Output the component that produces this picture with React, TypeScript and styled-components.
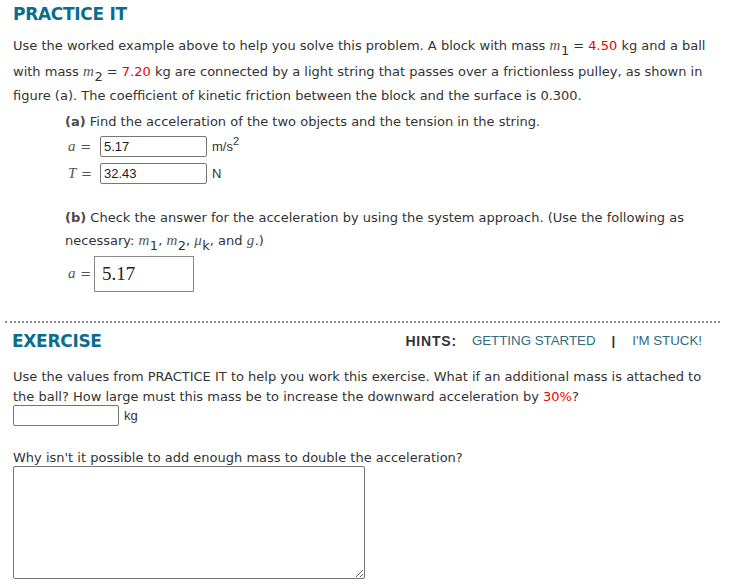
import React from "react"
import styled, { createGlobalStyle } from "styled-components"

const GlobalStyle = createGlobalStyle`
    body {
        margin: 0;
        background: #ffffff;
        font-family: "DejaVu Sans", Verdana, sans-serif;
        font-size: 13px;
        color: #333333;
    }
`

const Page = styled.div`
    width: 737px;
    padding: 4px 0 0 0;
    box-sizing: border-box;
`

const Section = styled.section`
    padding: 0 13px;
`

const Heading = styled.h2`
    margin: 0;
    font-size: 17px;
    font-weight: bold;
    color: #0b6d8c;
    letter-spacing: -0.3px;
    line-height: 20px;
`

const Para = styled.p<{ $lh?: number }>`
    margin: 0;
    line-height: ${({ $lh }) => $lh ?? 24.5}px;
`

const Red = styled.span`
    color: #ee0000;
`

const MathVar = styled.i`
    font-family: "Liberation Serif", "Times New Roman", serif;
    font-size: 15px;
    color: #555555;
    letter-spacing: 0.5px;
`

const Sub = styled.sub`
    font-size: 13px;
    vertical-align: -5px;
    line-height: 0;
    color: #333333;
    font-style: normal;
    font-family: "DejaVu Sans", Verdana, sans-serif;
`

const Part = styled.div<{ $top: number }>`
    padding-left: 52px;
    margin-top: ${({ $top }) => $top}px;
`

const PartTitle = styled.div`
    line-height: 22px;
`

const PartLabel = styled.b`
    color: #4a4a4a;
`

const AnswerRow = styled.div<{ $tall?: boolean }>`
    display: flex;
    align-items: center;
    height: ${({ $tall }) => ($tall ? 36 : 27)}px;
    margin-top: ${({ $tall }) => ($tall ? 4 : 0)}px;
    padding-left: 3px;
`

const Eq = styled.span<{ $w?: number }>`
    display: inline-block;
    width: ${({ $w }) => $w ?? 32}px;
    font-size: 13px;
    color: #555555;
    white-space: nowrap;
`

const TextBox = styled.div<{ $w: number; $h: number; $big?: boolean }>`
    width: ${({ $w }) => $w}px;
    height: ${({ $h }) => $h}px;
    box-sizing: border-box;
    border: 1px solid ${({ $big }) => ($big ? "#8a8a8a" : "#767676")};
    border-radius: ${({ $big }) => ($big ? 0 : 2)}px;
    display: flex;
    align-items: center;
    padding-left: ${({ $big }) => ($big ? 7 : 3)}px;
    font-family: ${({ $big }) =>
        $big
            ? `"Liberation Serif", "Times New Roman", serif`
            : `"Liberation Sans", Arial, sans-serif`};
    font-size: ${({ $big }) => ($big ? 19 : 13)}px;
    color: #222222;
`

const Unit = styled.span`
    margin-left: 5px;
    font-family: "Liberation Sans", Arial, sans-serif;
    font-size: 13px;
    color: #333333;
`

const Sup = styled.sup`
    font-size: 11px;
    vertical-align: 6px;
    line-height: 0;
`

const Dotted = styled.div`
    margin: 29px 17px 0 5px;
    border-top: 2px dotted #8c8c8c;
`

const ExerciseHeader = styled.div`
    display: flex;
    align-items: center;
    justify-content: space-between;
    padding: 8px 35px 0 12px;
`

const Hints = styled.div`
    display: flex;
    align-items: center;
    font-family: "Liberation Sans", Arial, sans-serif;
    font-size: 13.3px;
    color: #2f6b7c;
`

const HintsLabel = styled.b`
    font-size: 14px;
    letter-spacing: 0.8px;
    color: #333333;
    margin-right: 15px;
`

const HintLink = styled.span`
    color: #2f6b7c;
`

const Sep = styled.span`
    margin: 0 17px 0 16px;
    font-weight: bold;
    color: #333333;
`

const InputRow = styled.div`
    display: flex;
    align-items: center;
    margin-top: -2px;
`

const Question = styled.div`
    margin-top: 23px;
    line-height: 18px;
`

const Area = styled.textarea`
    display: block;
    margin-top: -1px;
    width: 352px;
    height: 113px;
    box-sizing: border-box;
    border: 1px solid #767676;
    border-radius: 2px;
    resize: both;
    font-family: "DejaVu Sans", Verdana, sans-serif;
`

const App = () => {
    return (
        <Page>
            <GlobalStyle />
            <Section>
                <Heading>PRACTICE IT</Heading>
                <Para style={{ marginTop: 9 }}>
                    Use the worked example above to help you solve this problem. A block with mass{" "}
                    <MathVar>m</MathVar>
                    <Sub>1</Sub> = <Red>4.50</Red> kg and a ball with mass <MathVar>m</MathVar>
                    <Sub>2</Sub> = <Red>7.20</Red> kg are connected by a light string that passes
                    over a frictionless pulley, as shown in figure (a). The coefficient of kinetic
                    friction between the block and the surface is 0.300.
                </Para>

                <Part $top={2}>
                    <PartTitle>
                        <PartLabel>(a)</PartLabel> Find the acceleration of the two objects and the
                        tension in the string.
                    </PartTitle>
                    <AnswerRow>
                        <Eq>
                            <MathVar>a</MathVar> =
                        </Eq>
                        <TextBox $w={107} $h={21}>5.17</TextBox>
                        <Unit>
                            m/s<Sup>2</Sup>
                        </Unit>
                    </AnswerRow>
                    <AnswerRow>
                        <Eq>
                            <MathVar>T</MathVar> =
                        </Eq>
                        <TextBox $w={107} $h={21}>32.43</TextBox>
                        <Unit>N</Unit>
                    </AnswerRow>
                </Part>

                <Part $top={20}>
                    <PartTitle>
                        <PartLabel>(b)</PartLabel> Check the answer for the acceleration by using the
                        system approach. (Use the following as necessary: <MathVar>m</MathVar>
                        <Sub>1</Sub>, <MathVar>m</MathVar>
                        <Sub>2</Sub>, <MathVar>μ</MathVar>
                        <Sub>k</Sub>, and <MathVar>g</MathVar>.)
                    </PartTitle>
                    <AnswerRow $tall>
                        <Eq $w={26}>
                            <MathVar>a</MathVar> =
                        </Eq>
                        <TextBox $w={100} $h={36} $big>5.17</TextBox>
                    </AnswerRow>
                </Part>
            </Section>

            <Dotted />

            <ExerciseHeader>
                <Heading>EXERCISE</Heading>
                <Hints>
                    <HintsLabel>HINTS:</HintsLabel>
                    <HintLink>GETTING STARTED</HintLink>
                    <Sep>|</Sep>
                    <HintLink>I'M STUCK!</HintLink>
                </Hints>
            </ExerciseHeader>

            <Section>
                <Para $lh={20} style={{ marginTop: 16 }}>
                    Use the values from PRACTICE IT to help you work this exercise. What if an
                    additional mass is attached to the ball? How large must this mass be to increase
                    the downward acceleration by <Red>30%</Red>?
                </Para>
                <InputRow>
                    <TextBox $w={106} $h={21} />
                    <Unit>kg</Unit>
                </InputRow>
                <Question>Why isn't it possible to add enough mass to double the acceleration?</Question>
                <Area />
            </Section>
        </Page>
    )
}

export default App
